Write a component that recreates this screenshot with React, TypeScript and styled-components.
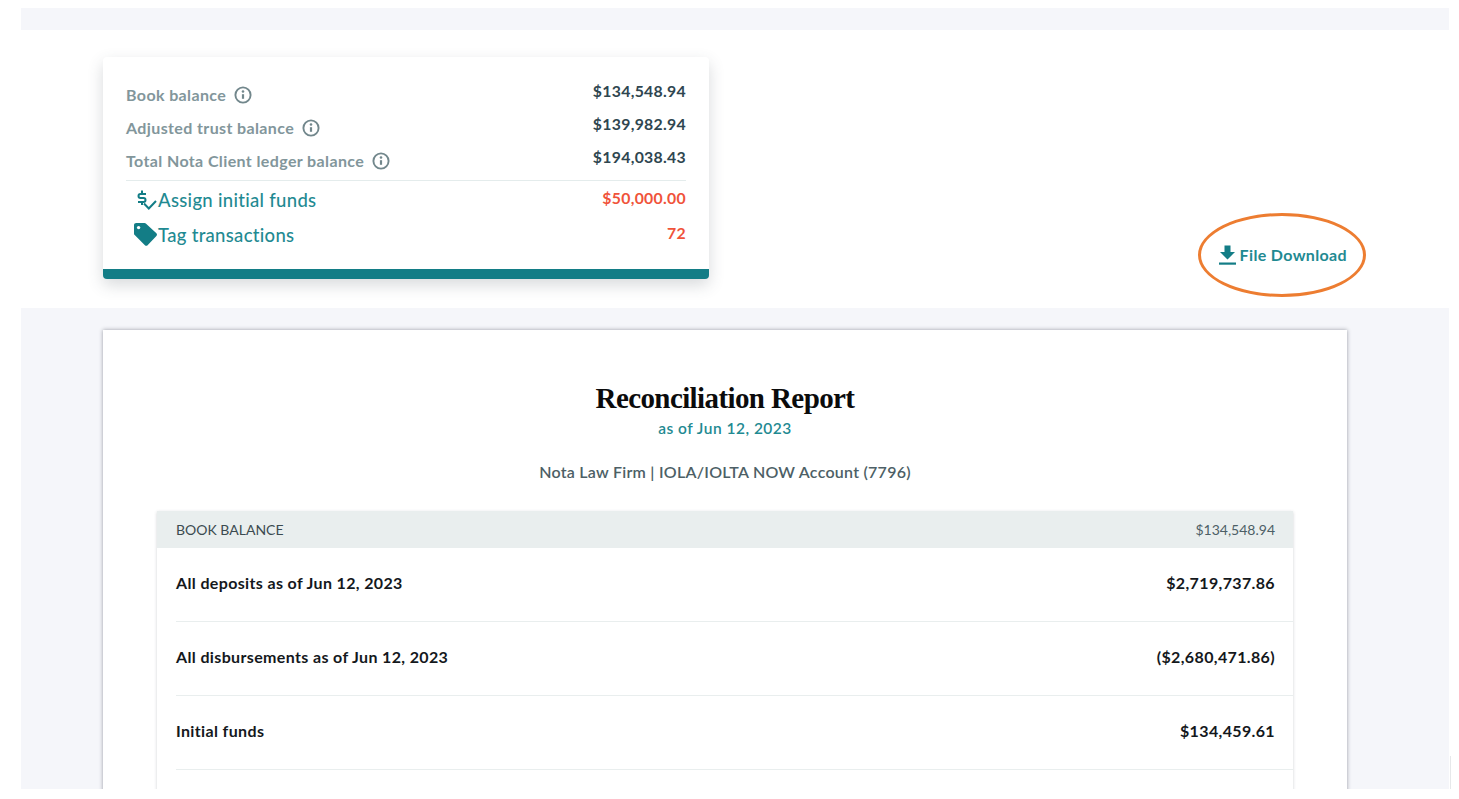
import React from "react";
import styled, { createGlobalStyle } from "styled-components";

const Global = createGlobalStyle`
  html, body { margin: 0; padding: 0; background: #fff; }
  body { font-family: "Lato", "Noto Sans", sans-serif; height: 799px; overflow: hidden; }
`;
const Page = styled.div`
  position: relative;
  height: 799px;
  box-sizing: border-box;
  padding: 8px 10px 10px 21px;
  display: flex;
  flex-direction: column;
  overflow: hidden;
`;
const TopBand = styled.div`
  height: 22px;
  flex: none;
  background: #f5f6fa;
`;
const SummaryArea = styled.section`
  height: 278px;
  flex: none;
  box-sizing: border-box;
  padding: 27px 102px 29px 82px;
  display: flex;
  justify-content: space-between;
  align-items: flex-end;
`;
const SummaryCard = styled.div`
  width: 606px;
  height: 222px;
  box-sizing: border-box;
  padding: 22px 23px 0;
  background: #fff;
  border-bottom: 10px solid #137d86;
  border-radius: 4px;
  box-shadow: 0 6px 16px rgba(60, 70, 80, 0.2);
`;
const BalanceRow = styled.div`
  height: 33px;
  display: flex;
  justify-content: space-between;
`;
const BalanceLabel = styled.span`
  display: flex;
  align-items: center;
  gap: 8px;
  height: 31px;
  font: 700 16px/20px "Lato", sans-serif;
  letter-spacing: 0.38px;
  color: #82969b;
`;
const BalanceValue = styled.span`
  font: 700 15.8px/20px "Lato", sans-serif;
  margin-top: 2px;
  color: #2f4650;
  letter-spacing: 0.3px;
`;
const Divider = styled.div`
  height: 1px;
  background: #e4ecec;
  margin: 2px 0 1px;
`;
const ActionRow = styled.div`
  height: 35px;
  display: flex;
  align-items: center;
  justify-content: space-between;
`;
const ActionLink = styled.span`
  display: flex;
  align-items: center;
  padding-left: 7px;
  font: 500 18.5px/24px "Lato", sans-serif;
  letter-spacing: 0.3px;
  color: #1f8a92;
`;
const ActionIcon = styled.span`
  width: 25px;
  height: 26px;
  display: flex;
  align-items: center;
  justify-content: center;
`;
const AlertValue = styled.span`
  font: 700 15.8px/20px "Lato", sans-serif;
  letter-spacing: 0.3px;
  color: #f0533a;
  margin-bottom: 4px;
`;
const DownloadLink = styled.div`
  position: relative;
  display: flex;
  align-items: center;
  gap: 3px;
  margin-bottom: 12px;
  height: 24px;
  font: 700 16px/20px "Lato", sans-serif;
  letter-spacing: 0.35px;
  color: #1f8a92;
`;
const Oval = styled.span`
  position: absolute;
  left: -20px;
  top: -30px;
  width: 168px;
  height: 84px;
  box-sizing: border-box;
  border: 3px solid #ed7d31;
  border-radius: 50%;
  pointer-events: none;
`;
const ReportArea = styled.section`
  flex: 1;
  min-height: 0;
  box-sizing: border-box;
  padding: 22px 102px 0 82px;
  background: #f5f6fa;
  overflow: hidden;
`;
const ReportCard = styled.div`
  height: 700px;
  box-sizing: border-box;
  padding: 50px 54px 0;
  background: #fff;
  box-shadow: 0 0 4px rgba(40, 45, 60, 0.45);
`;
const Title = styled.h1`
  margin: 0;
  text-align: center;
  font: 700 29px/36px "Liberation Serif", serif;
  letter-spacing: -0.6px;
  color: #0b0b0c;
`;
const AsOf = styled.div`
  margin-top: 2px;
  text-align: center;
  font: 600 15.5px/20px "Lato", sans-serif;
  letter-spacing: 0.5px;
  color: #1f8a92;
`;
const Firm = styled.div`
  margin-top: 24px;
  text-align: center;
  font: 600 16px/20px "Lato", sans-serif;
  letter-spacing: 0.25px;
  color: #4d5f66;
`;
const Table = styled.div`
  margin-top: 29px;
  box-shadow: 0 1px 3px rgba(60, 70, 80, 0.24);
`;
const TableHead = styled.div`
  height: 37px;
  padding: 0 18px 0 19px;
  display: flex;
  align-items: center;
  justify-content: space-between;
  background: #e9eeee;
  font: 400 14px/18px "Lato", sans-serif;
  color: #3c4b50;
`;
const HeadAmount = styled.span`
  font-size: 14px;
  color: #4d5f66;
`;
const TableRow = styled.div`
  height: 74px;
  box-sizing: border-box;
  margin-left: 19px;
  padding: 0 18px 3px 0;
  display: flex;
  align-items: center;
  justify-content: space-between;
  border-bottom: 1px solid #e9eeee;
  font: 700 16px/20px "Lato", sans-serif;
  letter-spacing: 0.36px;
  color: #14181c;
`;
const Sliver = styled.span`
  position: absolute;
  left: 1450px;
  top: 756px;
  width: 1px;
  height: 33px;
  background: #e6e8ea;
`;

const InfoIcon = () => (
  <svg width="18" height="18" viewBox="0 0 18 18" fill="none" stroke="#72878c" strokeWidth="1.9">
    <circle cx="9" cy="9" r="7.6" />
    <path d="M9 8.2v4.6" strokeWidth="2.2" />
    <circle cx="9" cy="5.5" r="1.3" fill="#72878c" stroke="none" />
  </svg>
);
const FundsIcon = () => (
  <svg width="22" height="24" viewBox="0 0 22 24" fill="none" stroke="#137d86" strokeWidth="2">
    <path d="M11 6H5.500c-1.300 0-2 .8-2 2s.7 2 2 2h3c1.300 0 2 .8 2 2s-.7 2-2 2H3" />
    <path d="M7 2.500V6M7 14v3" />
    <path d="M9 15.500l4.800 5L21 13" />
  </svg>
);
const TagIcon = () => (
  <svg width="25" height="25" viewBox="0 0 25 25">
    <path
      fill="#137d86"
      d="M1 3.300C1 1.900 1.900 1 3.300 1h8.200c.6 0 1.200.2 1.600.7l10.300 9.600c.8.8.8 1.900 0 2.700l-8.800 9.200c-.8.8-1.900.8-2.700 0L1.700 13.100C1.200 12.600 1 12 1 11.400V3.300z"
    />
    <circle cx="5.600" cy="5.600" r="1.700" fill="#fff" />
  </svg>
);
const DownloadIcon = () => (
  <svg width="19" height="21" viewBox="0 0 19 21">
    <path fill="#137d86" d="M6.500 0.500h6v6.500h4.500l-7.500 7.500-7.500-7.500h4.500z" />
    <rect x="1" y="17.500" width="17" height="2.200" fill="#137d86" />
  </svg>
);

const balances = [
  ["Book balance", "$134,548.94"],
  ["Adjusted trust balance", "$139,982.94"],
  ["Total Nota Client ledger balance", "$194,038.43"],
];
const rows = [
  ["All deposits as of Jun 12, 2023", "$2,719,737.86"],
  ["All disbursements as of Jun 12, 2023", "($2,680,471.86)"],
  ["Initial funds", "$134,459.61"],
];

export default function App() {
  return (
    <Page>
      <Global />
      <TopBand />
      <SummaryArea>
        <SummaryCard>
          {balances.map(([label, value]) => (
            <BalanceRow key={label}>
              <BalanceLabel>
                {label}
                <InfoIcon />
              </BalanceLabel>
              <BalanceValue>{value}</BalanceValue>
            </BalanceRow>
          ))}
          <Divider />
          <ActionRow>
            <ActionLink>
              <ActionIcon>
                <FundsIcon />
              </ActionIcon>
              Assign initial funds
            </ActionLink>
            <AlertValue>$50,000.00</AlertValue>
          </ActionRow>
          <ActionRow>
            <ActionLink>
              <ActionIcon>
                <TagIcon />
              </ActionIcon>
              Tag transactions
            </ActionLink>
            <AlertValue>72</AlertValue>
          </ActionRow>
        </SummaryCard>
        <DownloadLink>
          <Oval />
          <DownloadIcon />
          File Download
        </DownloadLink>
      </SummaryArea>
      <ReportArea>
        <ReportCard>
          <Title>Reconciliation Report</Title>
          <AsOf>as of Jun 12, 2023</AsOf>
          <Firm>Nota Law Firm | IOLA/IOLTA NOW Account (7796)</Firm>
          <Table>
            <TableHead>
              <span>BOOK BALANCE</span>
              <HeadAmount>$134,548.94</HeadAmount>
            </TableHead>
            {rows.map(([label, value]) => (
              <TableRow key={label}>
                <span>{label}</span>
                <span>{value}</span>
              </TableRow>
            ))}
            <TableRow />
          </Table>
        </ReportCard>
      </ReportArea>
      <Sliver />
    </Page>
  );
}
